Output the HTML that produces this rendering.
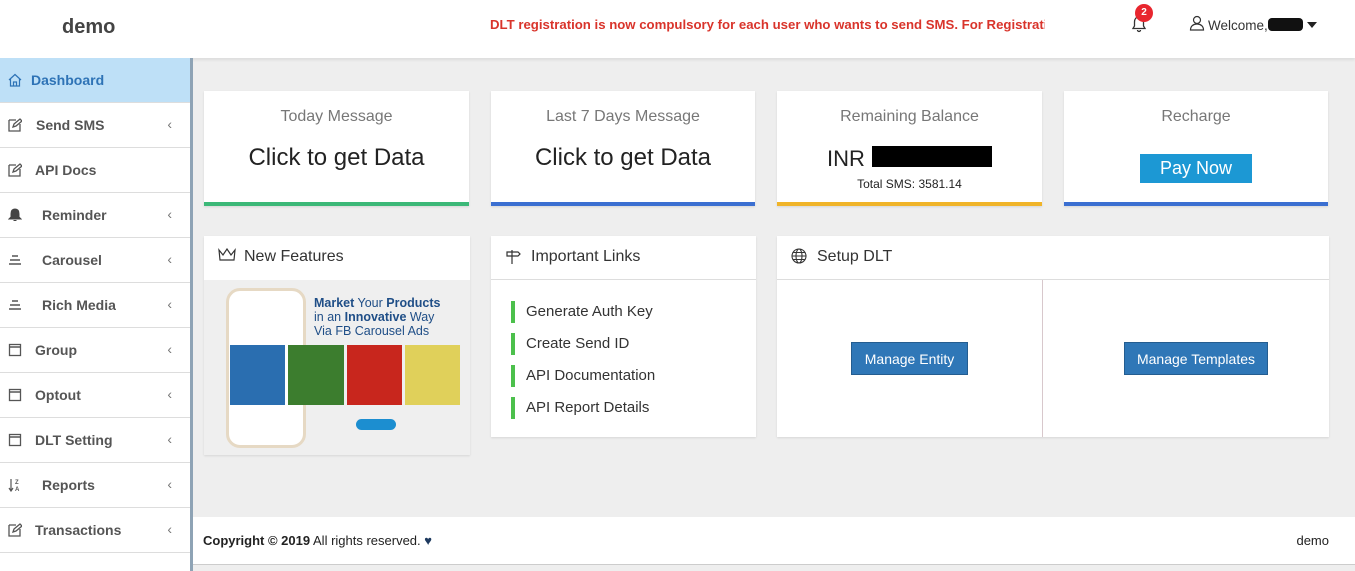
<!DOCTYPE html><html><head><style>
*{box-sizing:border-box;margin:0;padding:0}
body{width:1355px;height:571px;overflow:hidden;background:#eeeeee;font-family:"Liberation Sans",Arial,sans-serif;position:relative}
.hdr{position:absolute;left:0;top:0;width:1355px;height:58px;background:#fff;box-shadow:0 2px 3px rgba(0,0,0,.08)}
.logo{position:absolute;left:62px;top:16px;font-size:20px;font-weight:bold;color:#444}
.marq{position:absolute;left:490px;top:17px;width:555px;overflow:hidden;white-space:nowrap;color:#d9342b;font-weight:bold;font-size:13.2px}
.side{position:absolute;left:0;top:58px;width:193px;height:513px;background:#fff;border-right:3px solid #8ea3b5}
.it{height:45px;border-bottom:1px solid #ddd;display:flex;align-items:center;font-size:14px;font-weight:bold;color:#555;position:relative}
.it svg{position:absolute;left:8px;top:15px}
.it .ch{position:absolute;right:18px;top:13px;font-weight:normal;color:#777;font-size:14px}
.card{position:absolute;background:#fff;box-shadow:0 1px 2px rgba(0,0,0,.1)}
.t1{text-align:center;color:#777;font-size:16px;margin-top:17px}
.big{text-align:center;font-size:24px;color:#222;margin-top:18px}
.ph{height:44px;border-bottom:1px solid #ddd;font-size:16px;color:#333;padding:12px 0 0 40px;position:relative}
.lk{border-left:4px solid #4cc04c;padding-left:11px;font-size:15px;color:#333;height:22px;line-height:22px;margin:10px 0 0 20px}
.btn{position:absolute;background:#2f77b7;color:#fff;font-size:14px;height:33px;line-height:33px;text-align:center;border:1px solid #245d90}
</style></head><body>
<div class="hdr">
<div class="logo">demo</div>
<div class="marq">DLT registration is now compulsory for each user who wants to send SMS. For Registration</div>
<svg style="position:absolute;left:1131px;top:15px" width="16" height="18" viewBox="0 0 16 18"><path d="M8 2C5 2 3.5 4 3.5 7v4L2 13.5h12L12.5 11V7C12.5 4 11 2 8 2zM6.5 15a1.5 1.5 0 003 0" fill="none" stroke="#333" stroke-width="1.3"/></svg>
<div style="position:absolute;left:1135px;top:4px;width:18px;height:18px;border-radius:50%;background:#e8262e;color:#fff;font-size:10px;font-weight:bold;text-align:center;line-height:18px">2</div>
<svg style="position:absolute;left:1189px;top:15px" width="16" height="16" viewBox="0 0 16 16"><circle cx="8" cy="5" r="3.5" fill="none" stroke="#333" stroke-width="1.2"/><path d="M1.5 15c0-4 3-6 6.5-6s6.5 2 6.5 6z" fill="none" stroke="#333" stroke-width="1.2"/></svg>
<div style="position:absolute;left:1208px;top:18px;font-size:13.5px;color:#333">Welcome,</div>
<div style="position:absolute;left:1268px;top:18px;width:35px;height:13px;background:#111;border-radius:4px"></div>
<div style="position:absolute;left:1307px;top:22px;border:5px solid transparent;border-top:6px solid #222"></div>
</div>
<div class="side">
<div class="it" style="background:#bee0f7;color:#2e73b6"><svg width="14" height="14" viewBox="0 0 14 14"><path d="M1 7L7 1.5 13 7M2.5 6v7h9V6M5.5 13V9h3v4" fill="none" stroke="#2e73b6" stroke-width="1.2"/></svg><span style="margin-left:31px">Dashboard</span></div>
<div class="it"><svg width="14" height="14" viewBox="0 0 14 14"><path d="M1 2h7M1 2v11h11V6M5 9l1-3 6-5 2 2-6 5z" fill="none" stroke="#555" stroke-width="1.3"/></svg><span style="margin-left:36px">Send SMS</span><span class="ch">‹</span></div>
<div class="it"><svg width="14" height="14" viewBox="0 0 14 14"><path d="M1 2h7M1 2v11h11V6M5 9l1-3 6-5 2 2-6 5z" fill="none" stroke="#555" stroke-width="1.3"/></svg><span style="margin-left:35px">API Docs</span></div>
<div class="it"><svg width="14" height="14" viewBox="0 0 14 14"><path d="M7 1c-3 0-4 2-4 5v3l-2 2h12l-2-2V6c0-3-1-5-4-5zM5.5 12.5h3" fill="#444" stroke="#444"/></svg><span style="margin-left:42px">Reminder</span><span class="ch">‹</span></div>
<div class="it"><svg width="14" height="14" viewBox="0 0 14 14"><path d="M4 3h6M2 7h10M1 11h12" stroke="#555" stroke-width="1.5"/></svg><span style="margin-left:42px">Carousel</span><span class="ch">‹</span></div>
<div class="it"><svg width="14" height="14" viewBox="0 0 14 14"><path d="M4 3h6M2 7h10M1 11h12" stroke="#555" stroke-width="1.5"/></svg><span style="margin-left:42px">Rich Media</span><span class="ch">‹</span></div>
<div class="it"><svg width="14" height="14" viewBox="0 0 14 14"><rect x="1.5" y="1.5" width="11" height="11" fill="none" stroke="#555" stroke-width="1.3"/><path d="M1.5 4h11" stroke="#555" stroke-width="1.5"/></svg><span style="margin-left:35px">Group</span><span class="ch">‹</span></div>
<div class="it"><svg width="14" height="14" viewBox="0 0 14 14"><rect x="1.5" y="1.5" width="11" height="11" fill="none" stroke="#555" stroke-width="1.3"/><path d="M1.5 4h11" stroke="#555" stroke-width="1.5"/></svg><span style="margin-left:35px">Optout</span><span class="ch">‹</span></div>
<div class="it"><svg width="14" height="14" viewBox="0 0 14 14"><rect x="1.5" y="1.5" width="11" height="11" fill="none" stroke="#555" stroke-width="1.3"/><path d="M1.5 4h11" stroke="#555" stroke-width="1.5"/></svg><span style="margin-left:35px">DLT Setting</span><span class="ch">‹</span></div>
<div class="it"><svg width="14" height="14" viewBox="0 0 14 14"><path d="M3 1v12M1 10l2 3 2-3" fill="none" stroke="#555" stroke-width="1.2"/><text x="7" y="6" font-size="6" fill="#555" font-family="Liberation Sans">Z</text><text x="7" y="13" font-size="6" fill="#555" font-family="Liberation Sans">A</text></svg><span style="margin-left:42px">Reports</span><span class="ch">‹</span></div>
<div class="it"><svg width="14" height="14" viewBox="0 0 14 14"><path d="M1 2h7M1 2v11h11V6M5 9l1-3 6-5 2 2-6 5z" fill="none" stroke="#555" stroke-width="1.3"/></svg><span style="margin-left:35px">Transactions</span><span class="ch">‹</span></div>
</div>

<div class="card" style="left:204px;top:91px;width:265px;height:115px;border-bottom:4px solid #3cb878"><div class="t1">Today Message</div><div class="big">Click to get Data</div></div>
<div class="card" style="left:491px;top:91px;width:264px;height:115px;border-bottom:4px solid #3b6fd1"><div class="t1">Last 7 Days Message</div><div class="big">Click to get Data</div></div>
<div class="card" style="left:777px;top:91px;width:265px;height:115px;border-bottom:4px solid #f0b429"><div class="t1">Remaining Balance</div>
<div style="position:absolute;left:50px;top:55px;font-size:22px;color:#222">INR</div><div style="position:absolute;left:95px;top:55px;width:120px;height:21px;background:#000"></div>
<div style="position:absolute;left:0;width:265px;top:86px;text-align:center;font-size:12px;color:#222">Total SMS: 3581.14</div></div>
<div class="card" style="left:1064px;top:91px;width:264px;height:115px;border-bottom:4px solid #3b6fd1"><div class="t1">Recharge</div>
<div style="position:absolute;left:76px;top:63px;width:112px;height:29px;background:#1c98d4;color:#fff;font-size:18px;text-align:center;line-height:29px">Pay Now</div></div>

<div class="card" style="left:204px;top:236px;width:266px;height:219px">
<div class="ph" style="padding-left:40px;border:none"><svg style="position:absolute;left:14px;top:12px" width="18" height="14" viewBox="0 0 18 14"><path d="M1 2l4 5 4-6 4 6 4-5-1 10H2z" fill="none" stroke="#333" stroke-width="1.2"/></svg>New Features</div>
<div style="position:absolute;left:0;top:44px;width:266px;height:175px;background:#efefef">
<div style="position:absolute;left:22px;top:8px;width:80px;height:160px;border-radius:14px;background:#fff;border:3px solid #e6d9c4"></div>
<div style="position:absolute;left:26px;top:65px;width:230px;height:60px;display:flex;gap:3px"><div style="flex:1;background:#2a6eb0"></div><div style="flex:1;background:#3c7d2e"></div><div style="flex:1;background:#c8261d"></div><div style="flex:1;background:#e0d05a"></div></div>
<div style="position:absolute;left:110px;top:16px;font-size:12.5px;line-height:14px;color:#1f4e87"><b>Market</b> Your <b>Products</b><br>in an <b>Innovative</b> Way<br>Via FB Carousel Ads</div>
<div style="position:absolute;left:152px;top:139px;width:40px;height:11px;border-radius:6px;background:#1c8ed0"></div>
</div></div>

<div class="card" style="left:491px;top:236px;width:265px;height:201px">
<div class="ph"><svg style="position:absolute;left:14px;top:13px" width="16" height="16" viewBox="0 0 16 16"><path d="M7 15V1M2 3h11l2 2-2 2H2z" fill="none" stroke="#333" stroke-width="1.2"/></svg>Important Links</div>
<div style="padding-top:11px"><div class="lk">Generate Auth Key</div><div class="lk">Create Send ID</div><div class="lk">API Documentation</div><div class="lk">API Report Details</div></div>
</div>

<div class="card" style="left:777px;top:236px;width:552px;height:201px">
<div class="ph"><svg style="position:absolute;left:14px;top:12px" width="16" height="16" viewBox="0 0 16 16"><circle cx="8" cy="8" r="7" fill="none" stroke="#333" stroke-width="1.1"/><ellipse cx="8" cy="8" rx="3" ry="7" fill="none" stroke="#333" stroke-width="1.1"/><path d="M1 8h14M2.5 4.5h11M2.5 11.5h11" stroke="#333" stroke-width="1"/></svg>Setup DLT</div>
<div style="position:absolute;left:265px;top:44px;width:1px;height:157px;background:#d8c8cc"></div>
<div class="btn" style="left:74px;top:106px;width:117px">Manage Entity</div>
<div class="btn" style="left:347px;top:106px;width:144px">Manage Templates</div>
</div>

<div style="position:absolute;left:193px;top:517px;width:1162px;height:48px;background:#fff;border-bottom:1px solid #ccc">
<div style="position:absolute;left:10px;top:16px;font-size:13px;color:#222"><b>Copyright © 2019</b> All rights reserved. <span style="color:#1e3a5f">♥</span></div>
<div style="position:absolute;right:26px;top:16px;font-size:13px;color:#222">demo</div></div>
</body></html>
